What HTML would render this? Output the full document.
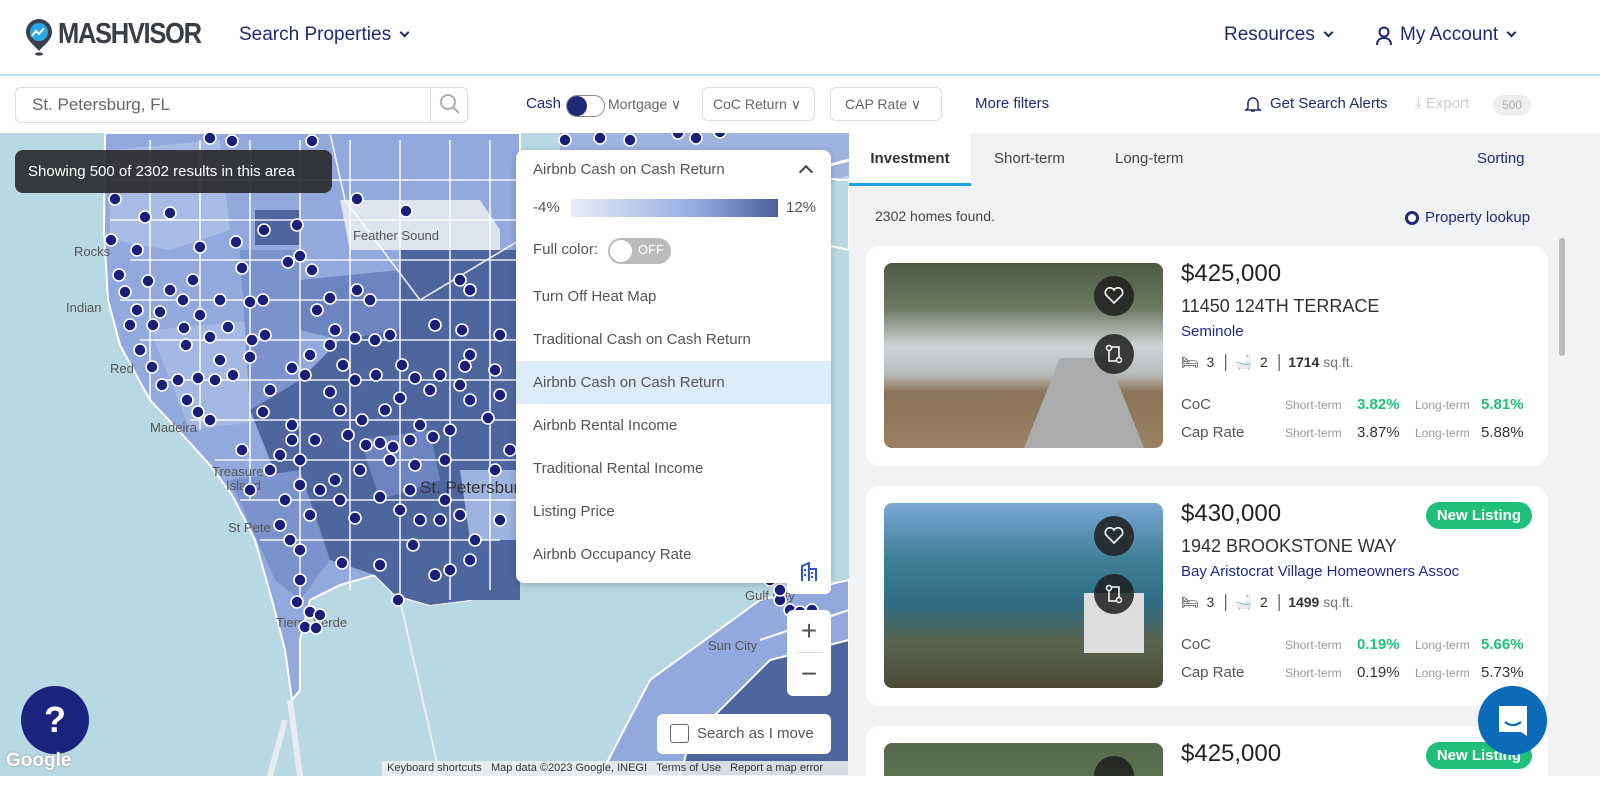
<!DOCTYPE html>
<html style="overflow:hidden;width:1600px;height:792px"><head><meta charset="utf-8">
<style>
*{box-sizing:border-box;margin:0;padding:0}
body{width:1600px;height:792px;overflow:hidden;font-family:"Liberation Sans",sans-serif;background:#fff;position:relative;color:#333}
.abs{position:absolute;white-space:nowrap}
.nav{color:#1e2a78;font-size:19px}
.chev{display:inline-block;width:7px;height:7px;border-right:2px solid #1e2a78;border-bottom:2px solid #1e2a78;transform:rotate(45deg);margin-left:10px;position:relative;top:-4px}
.tb{font-size:15px;color:#666}
.sel{border:1px solid #ddd;border-radius:6px;height:34px;top:87px;padding:8px 10px;font-size:14px;color:#666}
.dd div{font-size:15px;color:#555;height:43px;line-height:43px;padding-left:17px}
.card{position:absolute;left:866px;width:682px;height:220px;background:#fff;border-radius:14px;overflow:hidden}
.img{position:absolute;left:18px;top:17px;width:279px;height:185px;border-radius:8px;overflow:hidden}
.price{position:absolute;left:315px;top:14px;font-size:24px;color:#222}
.addr{position:absolute;left:315px;top:50px;font-size:18px;color:#333}
.city{position:absolute;left:315px;top:77px;font-size:15px;color:#1e2a8a}
.feat{position:absolute;left:315px;top:108px;font-size:14px;color:#333}
.row{position:absolute;left:315px;font-size:15px;color:#555;width:345px}
.row span{position:absolute;top:0}
.sm{font-size:12px;color:#999}
.g{color:#1fbf7a;font-weight:bold}
.circ{position:absolute;width:40px;height:40px;border-radius:50%;background:rgba(30,30,30,.85);left:228px}
.badge{position:absolute;right:16px;top:16px;background:#1fbf7a;color:#fff;font-weight:bold;font-size:15px;padding:5px 11px;border-radius:14px}
</style></head><body>

<div class="abs" style="left:0;top:0;width:1600px;height:76px;border-bottom:2px solid #b5e1f7"></div>
<svg class="abs" style="left:24px;top:17px" width="30" height="40" viewBox="0 0 30 40"><path d="M15 2a13 13 0 0 1 13 13c0 8-8 13-13 19C10 28 2 23 2 15A13 13 0 0 1 15 2z" fill="#3a3f4b"/><circle cx="15" cy="15" r="9" fill="#2aa6e8"/><path d="M8 19l4-5 3 3 5-6" stroke="#fff" stroke-width="2" fill="none"/><ellipse cx="15" cy="37" rx="4" ry="1.6" fill="#3a3f4b"/></svg>
<div class="abs" style="left:58px;top:18px;font-size:29px;font-weight:bold;color:#3a3d44;letter-spacing:-1.5px;transform:scaleX(.88);transform-origin:left">MASHVISOR</div>
<div class="abs nav" style="left:239px;top:24px">Search Properties<span class="chev"></span></div>
<div class="abs nav" style="left:1224px;top:24px">Resources<span class="chev"></span></div>
<svg class="abs" style="left:1375px;top:26px" width="18" height="20" viewBox="0 0 18 20"><circle cx="9" cy="6" r="4.5" stroke="#1e2a78" stroke-width="2" fill="none"/><path d="M2 19c0-5 3-7 7-7s7 2 7 7" stroke="#1e2a78" stroke-width="2" fill="none"/></svg>
<div class="abs nav" style="left:1400px;top:24px">My Account<span class="chev"></span></div>

<div class="abs" style="left:15px;top:87px;width:453px;height:36px;border:1px solid #ddd;border-radius:6px"></div>
<div class="abs" style="left:430px;top:87px;width:1px;height:36px;background:#ddd"></div>
<div class="abs" style="left:32px;top:95px;font-size:17px;color:#666">St. Petersburg, FL</div>
<svg class="abs" style="left:439px;top:93px" width="22" height="22"><circle cx="9" cy="9" r="7" stroke="#aab" stroke-width="2" fill="none"/><path d="M14 14l6 6" stroke="#aab" stroke-width="2"/></svg>
<div class="abs tb" style="left:526px;top:95px;color:#1e2a78">Cash</div>
<div class="abs" style="left:566px;top:95px;width:39px;height:22px;border-radius:11px;border:1px solid #888;background:#fff"></div>
<div class="abs" style="left:567px;top:96px;width:20px;height:20px;border-radius:50%;background:#1e2a78"></div>
<div class="abs tb" style="left:608px;top:96px;font-size:14px">Mortgage ∨</div>
<div class="abs sel" style="left:702px;width:113px">CoC Return ∨</div>
<div class="abs sel" style="left:830px;width:112px;padding-left:14px">CAP Rate ∨</div>
<div class="abs" style="left:975px;top:95px;font-size:15px;color:#1e2a78">More filters</div>
<svg class="abs" style="left:1244px;top:95px" width="18" height="18"><path d="M4 13V8a5 5 0 0 1 10 0v5l2 2H2zM7 16h4" stroke="#1e2a78" stroke-width="1.5" fill="none"/></svg>
<div class="abs" style="left:1270px;top:95px;font-size:15px;color:#1e2a78">Get Search Alerts</div>
<div class="abs" style="left:1415px;top:95px;font-size:15px;color:#ccc">⤓ Export</div>
<div class="abs" style="left:1493px;top:95px;width:38px;height:20px;border-radius:10px;background:#eee;font-size:12px;color:#aaa;text-align:center;line-height:20px">500</div>

<svg class="abs" style="left:0;top:133px" width="849" height="643" viewBox="0 133 849 643">
<rect x="0" y="133" width="849" height="643" fill="#b8d8e3"/>
<path d="M560 133L849 133L849 175L790 200L700 170L620 170L560 150Z" fill="#9fb3e0"/>
<path d="M640 170L849 180L849 250L760 230L700 250Z" fill="none" stroke="#fff" stroke-width="2"/>
<path d="M420 300L560 240L700 200L849 160" stroke="#fff" stroke-width="3" fill="none"/>
<path d="M105 133L520 133L520 560L495 580L470 600L430 605L395 595L375 575L340 585L310 600L300 640L300 690L292 700L285 650L272 600L255 540L232 495L210 465L180 432L150 400L120 345L108 300L104 230Z" fill="#93a9de" stroke="#fff" stroke-width="2"/>
<path d="M340 200L480 200L500 230L500 250L350 250Z" fill="#dde3ef"/>
<path d="M110 150L220 140L230 230L170 250L110 240Z" fill="#a8bbe5"/>
<path d="M150 330L260 320L270 420L190 430Z" fill="#a5b8e4"/>
<path d="M400 250L520 250L520 600L470 600L430 605L395 595L375 575L330 560L300 540L270 460L250 410L300 380L350 330L400 320Z" fill="#4f659e"/>
<path d="M300 280L400 270L400 330L340 340L300 330Z" fill="#6d84c0"/>
<path d="M360 440L430 430L440 480L380 500Z" fill="#6d84c0"/>
<path d="M460 470L520 470L520 540L470 540Z" fill="#9fb3e0"/>
<path d="M240 250L300 250L300 380L250 410Z" fill="#7b92cc"/>
<path d="M255 210L300 210L300 245L255 245Z" fill="#4f659e"/>
<path d="M230 480L300 470L330 560L300 600L275 580Z" fill="#7b92cc"/>
<g stroke="#fff" stroke-width="1.6" fill="none" opacity=".9">
<path d="M110 180H520M110 220H520M130 260H520M120 300H520M140 340H520M160 380H520M190 420H520M215 460H520M240 500H520M260 540H500"/>
<path d="M150 140V400M200 140V430M250 140V500M300 140V600M350 140V590M400 140V600M450 140V600M490 140V590"/>
<path d="M330 133L345 200L420 300L520 240"/>
</g>
<path d="M849 580L760 600L650 680L600 776L849 776Z" fill="#93a9de" stroke="#fff" stroke-width="2"/>
<path d="M849 640L770 660L690 740L680 776L849 776Z" fill="#4f659e" stroke="#fff" stroke-width="2"/>
<path d="M760 640L849 610" stroke="#fff" stroke-width="2"/>
<path d="M290 700L300 776M285 720L270 776" stroke="#e8ecef" stroke-width="6"/>
<path d="M400 600L440 776" stroke="#eee" stroke-width="2"/>
<g font-size="13" fill="#555" font-family="Liberation Sans">
<text x="353" y="240">Feather Sound</text><text x="66" y="312">Indian</text><text x="74" y="256">Rocks</text><text x="110" y="373">Red</text><text x="150" y="432">Madeira</text><text x="212" y="476">Treasure</text><text x="226" y="490">Island</text><text x="228" y="532">St Pete</text><text x="276" y="627">Tierra Verde</text><text x="708" y="650">Sun City</text><text x="745" y="600">Gulf City</text>
<text x="420" y="493" font-size="17" fill="#333">St. Petersburg</text>
</g>
<g fill="#1a1f7a" stroke="#fff" stroke-width="1.6">
<circle cx="210" cy="138" r="6"/><circle cx="232" cy="141" r="6"/><circle cx="312" cy="141" r="6"/><circle cx="115" cy="199" r="6"/><circle cx="145" cy="217" r="6"/><circle cx="170" cy="213" r="6"/><circle cx="264" cy="230" r="6"/><circle cx="297" cy="225" r="6"/><circle cx="357" cy="199" r="6"/><circle cx="406" cy="211" r="6"/><circle cx="111" cy="240" r="6"/><circle cx="137" cy="250" r="6"/><circle cx="200" cy="247" r="6"/><circle cx="236" cy="242" r="6"/><circle cx="288" cy="262" r="6"/><circle cx="300" cy="256" r="6"/><circle cx="148" cy="281" r="6"/><circle cx="170" cy="290" r="6"/><circle cx="193" cy="280" r="6"/><circle cx="242" cy="268" r="6"/><circle cx="220" cy="300" r="6"/><circle cx="119" cy="275" r="6"/><circle cx="125" cy="292" r="6"/><circle cx="137" cy="310" r="6"/><circle cx="160" cy="312" r="6"/><circle cx="183" cy="300" r="6"/><circle cx="130" cy="325" r="6"/><circle cx="153" cy="325" r="6"/><circle cx="200" cy="315" r="6"/><circle cx="250" cy="302" r="6"/><circle cx="263" cy="300" r="6"/><circle cx="265" cy="335" r="6"/><circle cx="312" cy="270" r="6"/><circle cx="330" cy="298" r="6"/><circle cx="317" cy="310" r="6"/><circle cx="357" cy="290" r="6"/><circle cx="370" cy="300" r="6"/><circle cx="335" cy="330" r="6"/><circle cx="330" cy="345" r="6"/><circle cx="310" cy="355" r="6"/><circle cx="292" cy="368" r="6"/><circle cx="305" cy="375" r="6"/><circle cx="250" cy="357" r="6"/><circle cx="252" cy="340" r="6"/><circle cx="270" cy="390" r="6"/><circle cx="220" cy="360" r="6"/><circle cx="215" cy="380" r="6"/><circle cx="198" cy="378" r="6"/><circle cx="178" cy="380" r="6"/><circle cx="152" cy="367" r="6"/><circle cx="162" cy="385" r="6"/><circle cx="187" cy="400" r="6"/><circle cx="198" cy="412" r="6"/><circle cx="210" cy="420" r="6"/><circle cx="233" cy="375" r="6"/><circle cx="140" cy="350" r="6"/><circle cx="184" cy="328" r="6"/><circle cx="186" cy="345" r="6"/><circle cx="210" cy="337" r="6"/><circle cx="228" cy="327" r="6"/><circle cx="355" cy="338" r="6"/><circle cx="375" cy="340" r="6"/><circle cx="390" cy="335" r="6"/><circle cx="376" cy="375" r="6"/><circle cx="355" cy="380" r="6"/><circle cx="343" cy="365" r="6"/><circle cx="402" cy="365" r="6"/><circle cx="415" cy="378" r="6"/><circle cx="430" cy="390" r="6"/><circle cx="440" cy="375" r="6"/><circle cx="460" cy="385" r="6"/><circle cx="465" cy="366" r="6"/><circle cx="470" cy="400" r="6"/><circle cx="488" cy="418" r="6"/><circle cx="495" cy="370" r="6"/><circle cx="500" cy="395" r="6"/><circle cx="462" cy="330" r="6"/><circle cx="470" cy="355" r="6"/><circle cx="435" cy="325" r="6"/><circle cx="460" cy="280" r="6"/><circle cx="470" cy="290" r="6"/><circle cx="500" cy="335" r="6"/><circle cx="400" cy="398" r="6"/><circle cx="385" cy="410" r="6"/><circle cx="362" cy="420" r="6"/><circle cx="340" cy="410" r="6"/><circle cx="330" cy="392" r="6"/><circle cx="263" cy="412" r="6"/><circle cx="292" cy="425" r="6"/><circle cx="292" cy="440" r="6"/><circle cx="280" cy="455" r="6"/><circle cx="300" cy="460" r="6"/><circle cx="315" cy="440" r="6"/><circle cx="348" cy="435" r="6"/><circle cx="366" cy="445" r="6"/><circle cx="380" cy="443" r="6"/><circle cx="393" cy="447" r="6"/><circle cx="410" cy="440" r="6"/><circle cx="420" cy="425" r="6"/><circle cx="433" cy="437" r="6"/><circle cx="450" cy="430" r="6"/><circle cx="445" cy="460" r="6"/><circle cx="415" cy="465" r="6"/><circle cx="390" cy="460" r="6"/><circle cx="360" cy="470" r="6"/><circle cx="335" cy="480" r="6"/><circle cx="320" cy="490" r="6"/><circle cx="300" cy="485" r="6"/><circle cx="285" cy="500" r="6"/><circle cx="310" cy="515" r="6"/><circle cx="340" cy="500" r="6"/><circle cx="355" cy="518" r="6"/><circle cx="380" cy="497" r="6"/><circle cx="400" cy="510" r="6"/><circle cx="420" cy="520" r="6"/><circle cx="445" cy="500" r="6"/><circle cx="460" cy="515" r="6"/><circle cx="475" cy="540" r="6"/><circle cx="470" cy="560" r="6"/><circle cx="450" cy="570" r="6"/><circle cx="435" cy="575" r="6"/><circle cx="413" cy="545" r="6"/><circle cx="380" cy="565" r="6"/><circle cx="342" cy="563" r="6"/><circle cx="290" cy="540" r="6"/><circle cx="300" cy="550" r="6"/><circle cx="280" cy="525" r="6"/><circle cx="300" cy="580" r="6"/><circle cx="297" cy="602" r="6"/><circle cx="310" cy="612" r="6"/><circle cx="320" cy="615" r="6"/><circle cx="305" cy="627" r="6"/><circle cx="316" cy="628" r="6"/><circle cx="398" cy="600" r="6"/><circle cx="440" cy="520" r="6"/><circle cx="500" cy="520" r="6"/><circle cx="495" cy="470" r="6"/><circle cx="510" cy="450" r="6"/><circle cx="410" cy="490" r="6"/><circle cx="250" cy="490" r="6"/><circle cx="242" cy="450" r="6"/><circle cx="270" cy="470" r="6"/><circle cx="565" cy="140" r="6"/><circle cx="600" cy="138" r="6"/><circle cx="630" cy="140" r="6"/><circle cx="678" cy="133" r="6"/><circle cx="696" cy="138" r="6"/><circle cx="720" cy="132" r="6"/><circle cx="780" cy="600" r="6"/><circle cx="790" cy="610" r="6"/><circle cx="800" cy="612" r="6"/><circle cx="770" cy="580" r="6"/><circle cx="780" cy="590" r="6"/><circle cx="812" cy="610" r="6"/></g>
</svg>
<div class="abs" style="left:15px;top:150px;width:317px;height:43px;background:rgba(40,40,40,.9);border-radius:8px;color:#fff;font-size:15px;line-height:43px;padding-left:13px">Showing 500 of 2302 results in this area</div>

<div class="abs dd" style="left:516px;top:150px;width:315px;height:433px;background:#fff;border-radius:8px;box-shadow:0 2px 8px rgba(0,0,0,.2)">
<div style="height:40px;line-height:40px;position:relative">Airbnb Cash on Cash Return<span style="position:absolute;right:20px;top:17px;width:10px;height:10px;border-left:2px solid #444;border-top:2px solid #444;transform:rotate(45deg)"></span></div>
<div style="height:35px;line-height:35px;position:relative">-4%<span style="position:absolute;left:55px;top:9px;width:207px;height:18px;background:linear-gradient(90deg,#e8edf8,#94ace0 60%,#4b5f9b)"></span><span style="position:absolute;left:270px;top:0">12%</span></div>
<div style="height:50px;line-height:50px;position:relative">Full color:<span style="position:absolute;left:92px;top:13px;width:63px;height:26px;border-radius:13px;background:#bbb"></span><span style="position:absolute;left:94px;top:15px;width:22px;height:22px;border-radius:50%;background:#fff"></span><span style="position:absolute;left:122px;top:0;color:#fff;font-size:13px">OFF</span></div>
<div>Turn Off Heat Map</div>
<div>Traditional Cash on Cash Return</div>
<div style="background:#dcecfb">Airbnb Cash on Cash Return</div>
<div>Airbnb Rental Income</div>
<div>Traditional Rental Income</div>
<div>Listing Price</div>
<div>Airbnb Occupancy Rate</div>
</div>
<div class="abs" style="left:787px;top:550px;width:44px;height:44px;background:#fff;border-radius:6px"></div>
<svg class="abs" style="left:800px;top:561px" width="18" height="22"><path d="M2 20V5l7-3v18M9 20V8h7v12" stroke="#2e55d6" stroke-width="2" fill="none"/><path d="M5 8v2M5 13v2M12 11v2M12 15v2" stroke="#2e55d6" stroke-width="2"/></svg>
<div class="abs" style="left:787px;top:610px;width:44px;height:86px;background:#fff;border-radius:6px;text-align:center;font-size:28px;color:#555;line-height:42px">+<div style="border-top:1px solid #ddd;width:28px;margin:0 auto">−</div></div>
<div class="abs" style="left:657px;top:714px;width:174px;height:40px;background:#fff;border-radius:6px;font-size:15px;color:#555;line-height:40px;padding-left:40px">Search as I move</div>
<div class="abs" style="left:670px;top:724px;width:19px;height:19px;border:1.5px solid #666;border-radius:3px"></div>
<div class="abs" style="left:21px;top:686px;width:68px;height:68px;border-radius:50%;background:#1a237e;color:#fff;font-size:36px;font-weight:bold;text-align:center;line-height:68px">?</div>
<div class="abs" style="left:6px;top:750px;font-size:19px;color:#fff;font-weight:bold;text-shadow:0 0 2px #888">Google</div>
<div class="abs" style="left:382px;top:761px;width:467px;height:15px;background:rgba(240,240,240,.85);font-size:11px;color:#333;line-height:15px;padding-left:5px">Keyboard shortcuts &nbsp;&nbsp;Map data ©2023 Google, INEGI &nbsp;&nbsp;Terms of Use &nbsp;&nbsp;Report a map error</div>

<div class="abs" style="left:849px;top:133px;width:751px;height:659px;background:#f1f2f4"></div>
<div class="abs" style="left:849px;top:133px;width:122px;height:53px;background:#fff;border-bottom:3px solid #1ea0e6;font-size:15px;color:#333;text-align:center;line-height:52px;font-weight:bold">Investment</div>
<div class="abs" style="left:994px;top:150px;font-size:15px;color:#444">Short-term</div>
<div class="abs" style="left:1115px;top:150px;font-size:15px;color:#444">Long-term</div>
<div class="abs" style="left:1477px;top:150px;font-size:15px;color:#1e2a78">Sorting</div>
<div class="abs" style="left:875px;top:208px;font-size:14px;color:#444">2302 homes found.</div>
<div class="abs" style="left:1405px;top:211px;width:14px;height:14px;border-radius:50%;border:3px solid #1e2a78;background:#fff"></div>
<div class="abs" style="left:1425px;top:209px;font-size:15px;color:#1e2a78">Property lookup</div>
<div class="abs" style="left:1559px;top:238px;width:6px;height:118px;border-radius:3px;background:#bbb"></div>

<div class="card" style="top:246px">
<div class="img" style="background:linear-gradient(180deg,#4e5a43 0%,#6f7a63 25%,#cfd3d6 45%,#b9bcbd 60%,#8a7357 70%,#9a8060 100%)"><div style="position:absolute;left:140px;top:95px;width:120px;height:90px;background:#a9abad;clip-path:polygon(30% 0,70% 0,100% 100%,0 100%)"></div></div>
<div class="circ" style="top:30px"></div><div class="circ" style="top:88px"></div>
<svg class="abs" style="left:238px;top:41px" width="20" height="18"><path d="M10 16L2 8a4.5 4.5 0 0 1 8-5 4.5 4.5 0 0 1 8 5z" stroke="#fff" stroke-width="1.6" fill="none"/></svg>
<svg class="abs" style="left:239px;top:98px" width="18" height="20"><circle cx="4" cy="4" r="2.5" stroke="#fff" stroke-width="1.5" fill="none"/><circle cx="14" cy="16" r="2.5" stroke="#fff" stroke-width="1.5" fill="none"/><path d="M4 7v10h7M14 13V3H7" stroke="#fff" stroke-width="1.5" fill="none"/></svg>
<div class="price">$425,000</div><div class="addr">11450 124TH TERRACE</div><div class="city">Seminole</div>
<div class="feat">🛏 &nbsp;3 &nbsp;│ 🛁 &nbsp;2 &nbsp;│ <b>1714</b> <span style="color:#777">sq.ft.</span></div>
<div class="row" style="top:150px"><span style="left:0">CoC</span><span class="sm" style="left:104px;top:2px">Short-term</span><span class="g" style="left:176px">3.82%</span><span class="sm" style="left:234px;top:2px">Long-term</span><span class="g" style="left:300px">5.81%</span></div>
<div class="row" style="top:178px"><span style="left:0">Cap Rate</span><span class="sm" style="left:104px;top:2px">Short-term</span><span style="left:176px;color:#333">3.87%</span><span class="sm" style="left:234px;top:2px">Long-term</span><span style="left:300px;color:#333">5.88%</span></div>
</div>

<div class="card" style="top:486px">
<div class="img" style="background:linear-gradient(180deg,#7ba7d4 0%,#3f7f96 30%,#2f6c82 55%,#5a6450 75%,#4b4a36 100%)"><div style="position:absolute;left:200px;top:90px;width:60px;height:60px;background:#ddd"></div></div>
<div class="circ" style="top:30px"></div><div class="circ" style="top:88px"></div>
<svg class="abs" style="left:238px;top:41px" width="20" height="18"><path d="M10 16L2 8a4.5 4.5 0 0 1 8-5 4.5 4.5 0 0 1 8 5z" stroke="#fff" stroke-width="1.6" fill="none"/></svg>
<svg class="abs" style="left:239px;top:98px" width="18" height="20"><circle cx="4" cy="4" r="2.5" stroke="#fff" stroke-width="1.5" fill="none"/><circle cx="14" cy="16" r="2.5" stroke="#fff" stroke-width="1.5" fill="none"/><path d="M4 7v10h7M14 13V3H7" stroke="#fff" stroke-width="1.5" fill="none"/></svg>
<div class="badge">New Listing</div>
<div class="price">$430,000</div><div class="addr">1942 BROOKSTONE WAY</div><div class="city">Bay Aristocrat Village Homeowners Assoc</div>
<div class="feat">🛏 &nbsp;3 &nbsp;│ 🛁 &nbsp;2 &nbsp;│ <b>1499</b> <span style="color:#777">sq.ft.</span></div>
<div class="row" style="top:150px"><span style="left:0">CoC</span><span class="sm" style="left:104px;top:2px">Short-term</span><span class="g" style="left:176px">0.19%</span><span class="sm" style="left:234px;top:2px">Long-term</span><span class="g" style="left:300px">5.66%</span></div>
<div class="row" style="top:178px"><span style="left:0">Cap Rate</span><span class="sm" style="left:104px;top:2px">Short-term</span><span style="left:176px;color:#333">0.19%</span><span class="sm" style="left:234px;top:2px">Long-term</span><span style="left:300px;color:#333">5.73%</span></div>
</div>

<div class="card" style="top:726px;height:50px;border-radius:14px 14px 0 0">
<div class="img" style="background:linear-gradient(180deg,#556a4a,#7a8c6a)"></div>
<div class="circ" style="top:30px"></div>
<div class="badge">New Listing</div>
<div class="price">$425,000</div>
</div>
<div class="abs" style="left:0;top:776px;width:1600px;height:16px;background:#fff"></div>

<div class="abs" style="left:1478px;top:686px;width:69px;height:69px;border-radius:50%;background:#0c6bb8"></div>
<svg class="abs" style="left:1496px;top:704px" width="34" height="34"><path d="M3 2h28v30l-6-4H3z" fill="#fff"/><path d="M9 18q8 6 16 0" stroke="#0c6bb8" stroke-width="2.2" fill="none"/></svg>
</body></html>
